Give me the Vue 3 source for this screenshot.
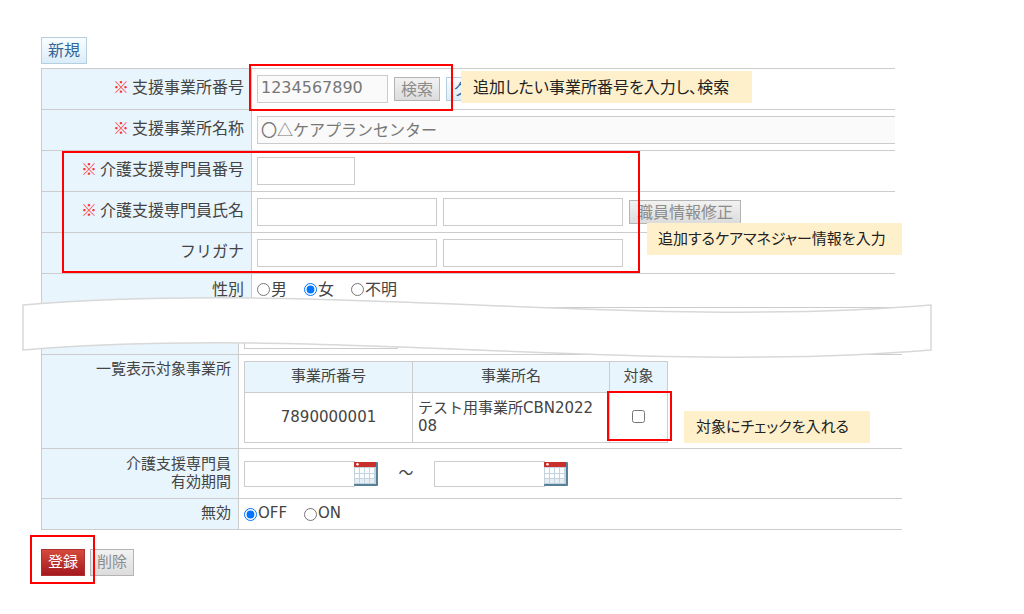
<template>
  <main class="page">
    <button type="button" class="btn btn-blue">新規</button>

    <form class="sheet sheet-top" @submit.prevent>
      <div class="row">
        <label class="head" for="office-no"><span class="must">※</span>支援事業所番号</label>
        <div class="value">
          <input id="office-no" v-model="form.officeNo" class="box w-no readonly" type="text" readonly>
          <button type="button" class="btn btn-gray btn-small">検索</button>
          <button type="button" class="btn btn-blue btn-small">クリア</button>
        </div>
        <span class="mark mark-search"></span>
        <p class="note note-search">追加したい事業所番号を入力し、検索</p>
      </div>
      <div class="row">
        <label class="head" for="office-name"><span class="must">※</span>支援事業所名称</label>
        <div class="value value-full">
          <input id="office-name" v-model="form.officeName" class="box w-full readonly" type="text" readonly>
        </div>
      </div>
      <div class="group">
        <div class="row">
          <label class="head" for="manager-no"><span class="must">※</span>介護支援専門員番号</label>
          <div class="value">
            <input id="manager-no" v-model="form.managerNo" class="box w-short" type="text">
          </div>
        </div>
        <div class="row">
          <label class="head" for="last-name"><span class="must">※</span>介護支援専門員氏名</label>
          <div class="value">
            <input id="last-name" v-model="form.lastName" class="box w-name" type="text">
            <input v-model="form.firstName" class="box w-name" type="text" aria-label="名">
            <button type="button" class="btn btn-gray btn-small btn-staff">職員情報修正</button>
          </div>
        </div>
        <div class="row">
          <label class="head" for="last-kana">フリガナ</label>
          <div class="value">
            <input id="last-kana" v-model="form.lastKana" class="box w-name" type="text">
            <input v-model="form.firstKana" class="box w-name" type="text" aria-label="メイ">
          </div>
        </div>
        <span class="mark mark-group"></span>
        <p class="note note-group">追加するケアマネジャー情報を入力</p>
      </div>
      <div class="row row-low">
        <span id="gender-label" class="head">性別</span>
        <div class="value radios" role="radiogroup" aria-labelledby="gender-label">
          <label v-for="g in genders" :key="g" class="radio">
            <input v-model="form.gender" type="radio" name="gender" :value="g">{{ g }}
          </label>
        </div>
      </div>
    </form>

    <!-- 途中の項目を省略 -->
    <div class="break">
      <svg class="wave" viewBox="0 0 912 62" preserveAspectRatio="none" aria-hidden="true">
        <path d="M1 9 C304 -16 608 34 910 9 V54 C608 79 304 29 1 54 Z" fill="#fff" stroke="#d8d8d8" stroke-width="1.5" />
      </svg>
    </div>

    <form class="sheet sheet-bottom" @submit.prevent>
      <div class="row row-cut">
        <span class="head"></span>
        <div class="value">
          <input class="box w-hidden" type="text" aria-label="備考">
        </div>
      </div>
      <div class="row row-list">
        <span class="head">一覧表示対象事業所</span>
        <div class="value">
          <table class="list">
            <thead>
              <tr>
                <th class="col-no">事業所番号</th>
                <th class="col-name">事業所名</th>
                <th class="col-check">対象</th>
              </tr>
            </thead>
            <tbody>
              <tr v-for="office in offices" :key="office.no">
                <td class="center">{{ office.no }}</td>
                <td class="name">{{ office.name }}</td>
                <td class="center target">
                  <input v-model="office.checked" type="checkbox" :aria-label="office.name">
                  <span class="mark mark-check"></span>
                </td>
              </tr>
            </tbody>
          </table>
        </div>
        <p class="note note-check">対象にチェックを入れる</p>
      </div>
      <div class="row row-term">
        <label class="head" for="term-from">介護支援専門員<br>有効期間</label>
        <div class="value term">
          <template v-for="(t, i) in terms" :key="t.id">
            <span v-if="i > 0" class="tilde">～</span>
            <span class="date">
              <input :id="t.id" v-model="t.value" class="box w-date" type="text" :aria-label="t.label">
              <button type="button" class="cal" :aria-label="t.label + 'を選択'">
                <svg viewBox="0 0 24 25" width="24" height="25">
                  <rect x="0" y="1" width="24" height="24" rx="1" fill="#577f95" />
                  <rect x="0" y="1" width="22" height="22" fill="#c3d3df" />
                  <rect x="0" y="1" width="22" height="5" fill="#c9302c" />
                  <circle cx="3.500" cy="3.200" r="1.200" fill="#fff" />
                  <path d="M1 7h4v5H1zM6 7h4v5H6zM11 7h4v5h-4zM16 7h4v5h-4zM1 13h4v4H1zM6 13h4v4H6zM11 13h4v4h-4zM16 13h4v4h-4z" fill="#fbfdff" />
                  <path d="M1 18h4v4H1zM6 18h4v4H6zM11 18h4v4h-4zM16 18h4v4h-4z" fill="#e6eef4" />
                </svg>
              </button>
            </span>
          </template>
        </div>
      </div>
      <div class="row row-off">
        <span id="off-label" class="head">無効</span>
        <div class="value radios" role="radiogroup" aria-labelledby="off-label">
          <label v-for="s in ['OFF', 'ON']" :key="s" class="radio">
            <input v-model="form.disabled" type="radio" name="disabled" :value="s">{{ s }}
          </label>
        </div>
      </div>
    </form>

    <div class="actions">
      <button type="button" class="btn btn-red">登録</button>
      <button type="button" class="btn btn-gray">削除</button>
      <span class="mark mark-save"></span>
    </div>
  </main>
</template>

<script setup>
import { reactive, ref } from 'vue'

const genders = ['男', '女', '不明']

const form = reactive({
  officeNo: '1234567890',
  officeName: '〇△ケアプランセンター',
  managerNo: '',
  lastName: '',
  firstName: '',
  lastKana: '',
  firstKana: '',
  gender: '女',
  disabled: 'OFF'
})

const offices = ref([
  { no: '7890000001', name: 'テスト用事業所CBN202208', checked: false }
])

const terms = ref([
  { id: 'term-from', label: '開始日', value: '' },
  { id: 'term-to', label: '終了日', value: '' }
])
</script>

<style>
body {
  margin: 0;
  background: #fff;
}
</style>

<style scoped>
.page {
  padding: 37px 122px 30px 41px;
  color: #444;
  font-family: "Noto Sans CJK JP", sans-serif;
  font-size: 16px;
  line-height: 20px;
}

.page * {
  box-sizing: border-box;
}

.btn {
  display: block;
  height: 27px;
  padding: 0 6px 4px;
  border: 1px solid #b4b4b4;
  font: inherit;
  line-height: 20px;
  white-space: nowrap;
}

.btn-small {
  height: 24px;
  margin-right: 6px;
}

.btn-blue {
  border-color: #b5cfdf;
  background: linear-gradient(#fafdff, #d9edf9);
  color: #336699;
}

.btn-gray {
  background: linear-gradient(#f2f2f2, #dcdcdc);
  color: #8c8c8c;
}

.btn-red {
  border-color: #b03030;
  background: linear-gradient(#d54a3c, #a3191f);
  color: #fff;
}

.btn-staff {
  padding: 0 7px 4px;
}

.sheet {
  border: 1px solid #ccc;
  border-top: 0;
  border-right: 0;
}

.sheet-top {
  margin: 4px 7px 0 0;
}

.row {
  position: relative;
  display: grid;
  grid-template-columns: 210px 1fr;
  min-height: 41px;
  border-top: 1px solid #ccc;
}

.row-low {
  min-height: 34px;
}

.head {
  display: flex;
  align-items: center;
  justify-content: flex-end;
  padding: 0 7px 6px 0;
  border-right: 1px solid #ccc;
  background: #e8f5fd;
  text-align: right;
}

.must {
  margin-right: 3px;
  color: #f33;
}

.value {
  display: flex;
  align-items: center;
  min-width: 0;
  padding-left: 5px;
}

.box {
  height: 28px;
  margin: 0 6px 0 0;
  padding: 0 3px 3px;
  border: 1px solid #ccc;
  border-radius: 0;
  background: #fff;
  color: #777;
  font-family: "DejaVu Sans", "Noto Sans CJK JP", sans-serif;
  font-size: 16px;
  outline: 0;
}

.readonly {
  background: #fafafa;
}

.w-no {
  width: 131px;
}

.w-full {
  width: 100%;
  margin-right: 0;
  border-right: 0;
  font-family: "Noto Sans CJK JP", sans-serif;
}

.w-short {
  width: 98px;
}

.w-name {
  width: 180px;
}

.w-hidden {
  width: 154px;
}

.w-date {
  width: 111px;
}

.group {
  position: relative;
}

.radios {
  gap: 17px;
  padding-bottom: 6px;
}

.radio {
  display: flex;
  align-items: center;
}

.radio input {
  width: 13px;
  height: 13px;
  margin: 4px 1px 0 0;
}

/* 省略を示す波線 */
.break {
  position: relative;
  z-index: 1;
  height: 5px;
}

.wave {
  position: absolute;
  top: -12px;
  left: -19px;
  width: calc(100% + 50px);
  height: 62px;
}

.sheet-bottom {
  font-size: 15px;
  line-height: 18px;
}

.sheet-bottom .row {
  grid-template-columns: 197px 1fr;
}

.sheet-bottom .head {
  padding-bottom: 3px;
}

.sheet-bottom .box {
  height: 26px;
}

.sheet-bottom .row-cut .value {
  align-items: flex-end;
  padding-bottom: 5px;
}

.row-list .head {
  align-items: flex-start;
  padding-top: 4px;
}

.row-list .value {
  padding-top: 6px;
  padding-bottom: 5px;
}

.list {
  width: 424px;
  border-collapse: collapse;
  table-layout: fixed;
}

.list th,
.list td {
  border: 1px solid #ccc;
  font-weight: normal;
}

.list th {
  height: 31px;
  padding: 0 0 5px;
  background: #e8f5fd;
}

.list td {
  height: 50px;
  padding: 0 0 2px;
  font-family: "DejaVu Sans", "Noto Sans CJK JP", sans-serif;
}

.list .center {
  text-align: center;
}

.list .name {
  padding: 0 11px 2px 5px;
  word-break: break-all;
}

.col-no {
  width: 168px;
}

.col-name {
  width: 197px;
}

.target {
  position: relative;
}

.target input {
  display: block;
  width: 13px;
  height: 13px;
  margin: 0 auto;
}

.row-term {
  min-height: 50px;
}

.sheet-bottom .row-off {
  min-height: 31px;
  font-family: "DejaVu Sans", "Noto Sans CJK JP", sans-serif;
}

.row-off .radios {
  padding-bottom: 2px;
}

.row-off .radio input {
  margin-top: 2px;
}

.date {
  display: flex;
  align-items: center;
}

.date .box {
  margin-right: 0;
}

.cal {
  width: 24px;
  height: 25px;
  margin-left: -1px;
  padding: 0;
  border: 0;
  background: none;
}

.cal svg {
  display: block;
}

.tilde {
  width: 56px;
  padding-bottom: 3px;
  text-align: center;
}

.actions {
  position: relative;
  display: flex;
  gap: 5px;
  width: max-content;
  margin-top: 19px;
  font-size: 15px;
}

/* 説明用の赤枠と吹き出し */
.mark {
  position: absolute;
  z-index: 2;
  border: 2px solid #f00;
  pointer-events: none;
}

.mark-search {
  top: -5px;
  left: 207px;
  width: 204px;
  height: 47px;
}

.mark-group {
  top: 1px;
  left: 20px;
  width: 578px;
  height: 122px;
}

.mark-check {
  top: -2px;
  left: -3px;
  width: 65px;
  height: 50px;
}

.mark-save {
  top: -14px;
  left: -11px;
  width: 65px;
  height: 49px;
}

.note {
  position: absolute;
  z-index: 2;
  margin: 0;
  padding: 5px 11px 7px;
  background: #fff0cc;
  color: #222;
  font-size: 15px;
  line-height: 20px;
  font-feature-settings: "palt";
  white-space: nowrap;
}

.note-search {
  top: 2px;
  left: 419px;
  width: 291px;
  padding-left: 12px;
  font-size: 16px;
}

.note-group {
  top: 73px;
  left: 605px;
  width: 255px;
}

.note-check {
  top: 56px;
  left: 642px;
  width: 186px;
  padding-left: 12px;
}
</style>
